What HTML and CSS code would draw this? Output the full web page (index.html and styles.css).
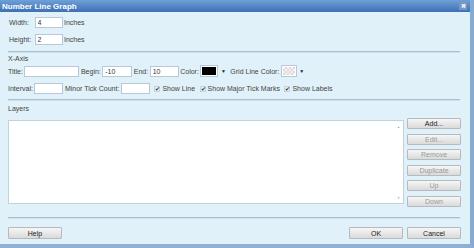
FILE: index.html
```html
<!DOCTYPE html>
<html lang="en">
<head>
  <meta charset="UTF-8" />
  <title>Number Line Graph</title>
  <link rel="stylesheet" href="styles.css">
</head>
<body>
  <div class="dialog">
    <div class="titlebar">
      <span>Number Line Graph</span>
      <span class="close">&#x2716;</span>
    </div>

    <div class="content">
      <div class="row size-row">
        <label class="lbl">Width:</label>
        <input class="txt w28" type="text" value="4" />
        <span>Inches</span>
      </div>
      <div class="row size-row">
        <label class="lbl">Height:</label>
        <input class="txt w28" type="text" value="2" />
        <span>Inches</span>
      </div>

      <div class="sep"></div>

      <div class="group-title">X-Axis</div>
      <div class="row axis-row">
        <label>Title:</label>
        <input class="txt w55" type="text" />
        <label>Begin:</label>
        <input class="txt w30" type="text" value="-10" />
        <label>End:</label>
        <input class="txt w29" type="text" value="10" />
        <label>Color:</label>
        <span class="swatch"><span class="fill black"></span></span>
        <span class="arrow">&#9660;</span>
        <label>Grid Line Color:</label>
        <span class="swatch narrow"><span class="fill grid"></span></span>
        <span class="arrow">&#9660;</span>
      </div>
      <div class="row axis-row2">
        <label>Interval:</label>
        <input class="txt w29" type="text" />
        <label>Minor Tick Count:</label>
        <input class="txt w29" type="text" />
        <label class="chk"><span class="box">&#10004;</span>Show Line</label>
        <label class="chk"><span class="box">&#10004;</span>Show Major Tick Marks</label>
        <label class="chk"><span class="box">&#10004;</span>Show Labels</label>
      </div>

      <div class="sep"></div>

      <div class="group-title layers-title">Layers</div>
      <div class="layers">
        <div class="list">
          <div class="scroll"><span>&#9650;</span><span>&#9660;</span></div>
        </div>
        <div class="side-btns">
          <button class="btn">Add...</button>
          <button class="btn off">Edit...</button>
          <button class="btn off">Remove</button>
          <button class="btn off">Duplicate</button>
          <button class="btn off">Up</button>
          <button class="btn off">Down</button>
        </div>
      </div>

      <div class="sep bottom-sep"></div>

      <div class="footer">
        <button class="btn">Help</button>
        <div class="right">
          <button class="btn">OK</button>
          <button class="btn">Cancel</button>
        </div>
      </div>
    </div>
  </div>
</body>
</html>
```

FILE: styles.css
```css
body {
  margin: 0;
  background: #e0f1f9;
  font-family: 'Liberation Sans', Arial, sans-serif;
  font-size: 7px;
  color: #444;
}
.dialog {
  width: 474px;
  height: 248px;
  box-sizing: border-box;
  border-right: 4px solid #86aad0;
  border-bottom: 4px solid #8fb0d2;
  background: #e0f1f9;
  display: flex;
  flex-direction: column;
}
.titlebar {
  height: 12px;
  flex: none;
  background: linear-gradient(#6fa0d8, #3d70b4);
  color: #fff;
  font-weight: bold;
  font-size: 8px;
  display: flex;
  justify-content: space-between;
  align-items: center;
  padding: 0 3px 0 2px;
}
.close {
  width: 8px;
  height: 8px;
  background: #7696c6;
  font-size: 6px;
  line-height: 8px;
  text-align: center;
  color: #eef3fa;
}
.content {
  padding: 5px 7px 0 8px;
  flex: 1;
  display: flex;
  flex-direction: column;
}
.row {
  display: flex;
  align-items: center;
  gap: 1.5px;
}
.size-row { height: 11px; margin-bottom: 6px; }
.lbl { width: 24px; margin-left: 1px; }
.txt {
  box-sizing: border-box;
  height: 11px;
  border: 1px solid #b7c9d8;
  background: #fff;
  font: inherit;
  color: #333;
  padding: 0 2px;
  margin: 0;
}
.w28 { width: 28px; }
.w29 { width: 29px; }
.w30 { width: 30px; }
.w55 { width: 55px; }
.sep {
  flex: none;
  height: 1px;
  border-top: 1px solid #a6c0d1;
  background: #cfe2ec;
  margin: 0 3px 0 0;
}
.group-title { margin: 2px 0 0 0; height: 8px; line-height: 8px; }
.axis-row { height: 12px; margin-top: 2px; }
.axis-row2 { height: 11px; margin-top: 6px; margin-bottom: 5px; }
.swatch {
  width: 18px;
  height: 12px;
  box-sizing: border-box;
  border: 1px solid #b7c9d8;
  background: #fff;
  padding: 1px;
  display: inline-flex;
}
.swatch.narrow { width: 16px; }
.fill { flex: 1; }
.fill.black { background: #000; }
.fill.grid {
  background-color: #f4f2f2;
  background-image: linear-gradient(45deg, #e4d6da 25%, transparent 25%, transparent 75%, #e4d6da 75%),
    linear-gradient(45deg, #e4d6da 25%, transparent 25%, transparent 75%, #e4d6da 75%);
  background-size: 4px 4px;
  background-position: 0 0, 2px 2px;
}
.arrow { font-size: 5px; margin: 0 3px 0 1px; color: #222; }
.chk { display: inline-flex; align-items: center; gap: 2px; margin-left: 3px; }
.box {
  box-sizing: border-box;
  width: 6px;
  height: 6px;
  border: 1px solid #c6d3dc;
  font-size: 6px;
  line-height: 4px;
  color: #333;
  display: inline-block;
  text-align: center;
  overflow: visible;
}
.layers-title { margin-top: 4px; }
.layers {
  flex: none;
  display: flex;
  align-items: flex-start;
  gap: 3px;
  margin-top: 5px;
  height: 89px;
  margin-right: 2px;
}
.list {
  flex: 1;
  height: 84px;
  box-sizing: border-box;
  margin-top: 2px;
  background: #fff;
  border: 1px solid #c1d2de;
  position: relative;
}
.scroll {
  position: absolute;
  right: 3px;
  top: 4px;
  bottom: 3px;
  display: flex;
  flex-direction: column;
  justify-content: space-between;
  font-size: 3px;
  color: #999;
}
.side-btns {
  width: 54px;
  display: flex;
  flex-direction: column;
  gap: 4.6px;
}
.btn {
  box-sizing: border-box;
  width: 54px;
  height: 11px;
  padding: 0;
  margin: 0;
  border: 1px solid #b4babf;
  border-radius: 1px;
  background: linear-gradient(#f6f6f6, #dadada);
  font: inherit;
  color: #222;
  cursor: pointer;
}
.btn.off { color: #9a9a9a; }
.bottom-sep { margin-top: 10px; }
.footer {
  flex: none;
  display: flex;
  justify-content: space-between;
  margin-top: 8px;
  margin-right: 2px;
}
.footer .btn { height: 12px; }
.right { display: flex; gap: 4px; }
```
